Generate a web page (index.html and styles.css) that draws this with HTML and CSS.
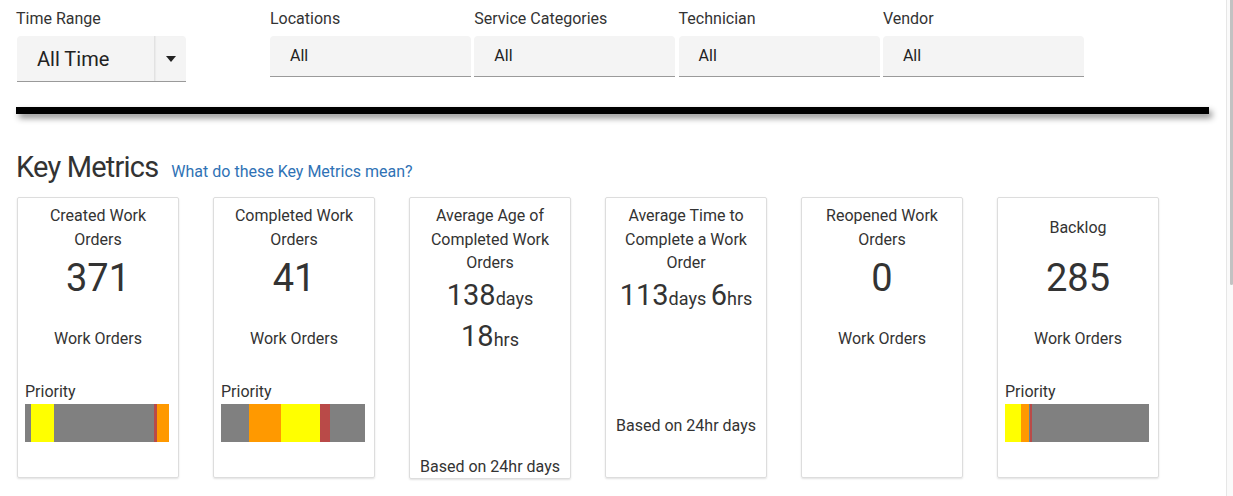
FILE: index.html
```html
<!DOCTYPE html>
<html lang="en">
<head>
    <meta charset="UTF-8">
    <meta name="viewport" content="width=device-width, initial-scale=1.0">
    <title>Work Order Dashboard</title>
    <link rel="stylesheet" href="styles.css">
</head>
<body>
    <div class="page">
        <div class="filters">
            <div class="filter time-range">
                <label>Time Range</label>
                <div class="select">
                    <span class="select-value">All Time</span>
                    <span class="select-arrow"></span>
                </div>
            </div>
            <div class="filter">
                <label>Locations</label>
                <div class="field">All</div>
            </div>
            <div class="filter">
                <label>Service Categories</label>
                <div class="field">All</div>
            </div>
            <div class="filter">
                <label>Technician</label>
                <div class="field">All</div>
            </div>
            <div class="filter">
                <label>Vendor</label>
                <div class="field">All</div>
            </div>
        </div>

        <div class="divider"></div>

        <div class="section-head">
            <h2>Key Metrics</h2>
            <a href="#" class="help-link">What do these Key Metrics mean?</a>
        </div>

        <div class="metrics">
            <div class="metric-card">
                <div class="metric-title">Created Work Orders</div>
                <div class="metric-value">371</div>
                <div class="metric-unit">Work Orders</div>
                <div class="priority">
                    <div class="priority-label">Priority</div>
                    <div class="priority-bar">
                        <span class="seg grey" style="width:6px"></span>
                        <span class="seg yellow" style="width:23px"></span>
                        <span class="seg grey" style="width:100px"></span>
                        <span class="seg red" style="width:3px"></span>
                        <span class="seg orange" style="width:12px"></span>
                    </div>
                </div>
            </div>

            <div class="metric-card">
                <div class="metric-title">Completed Work Orders</div>
                <div class="metric-value">41</div>
                <div class="metric-unit">Work Orders</div>
                <div class="priority">
                    <div class="priority-label">Priority</div>
                    <div class="priority-bar">
                        <span class="seg grey" style="width:28px"></span>
                        <span class="seg orange" style="width:32px"></span>
                        <span class="seg yellow" style="width:39px"></span>
                        <span class="seg red" style="width:10px"></span>
                        <span class="seg grey" style="width:35px"></span>
                    </div>
                </div>
            </div>

            <div class="metric-card">
                <div class="metric-title">Average Age of Completed Work Orders</div>
                <div class="metric-duration">138<small>days</small><br>18<small>hrs</small></div>
                <div class="metric-note">Based on 24hr days</div>
            </div>

            <div class="metric-card">
                <div class="metric-title">Average Time to Complete a Work Order</div>
                <div class="metric-duration">113<small>days </small>6<small>hrs</small></div>
                <div class="metric-note">Based on 24hr days</div>
            </div>

            <div class="metric-card">
                <div class="metric-title">Reopened Work Orders</div>
                <div class="metric-value">0</div>
                <div class="metric-unit">Work Orders</div>
            </div>

            <div class="metric-card">
                <div class="metric-title">Backlog</div>
                <div class="metric-value">285</div>
                <div class="metric-unit">Work Orders</div>
                <div class="priority">
                    <div class="priority-label">Priority</div>
                    <div class="priority-bar">
                        <span class="seg yellow" style="width:16px"></span>
                        <span class="seg orange" style="width:8px"></span>
                        <span class="seg slate" style="width:1px"></span>
                        <span class="seg red" style="width:2px"></span>
                        <span class="seg grey" style="width:117px"></span>
                    </div>
                </div>
            </div>
        </div>
    </div>

    <div class="scrollbar"><div class="scroll-thumb"></div></div>
</body>
</html>
```

FILE: styles.css
```css
html, body {
    height: 100%;
}
body {
    margin: 0;
    display: flex;
    font-family: Roboto, "Liberation Sans", Arial, sans-serif;
    color: #333;
    background-color: white;
    overflow: hidden;
}
.page {
    flex: 1;
    padding: 10px 0 0 16px;
}

/* filters */
.filters {
    display: flex;
    align-items: flex-start;
}
.filter {
    width: 201px;
    margin-right: 3.3px;
}
.filter label {
    display: block;
    font-size: 16px;
    line-height: 18px;
    margin-bottom: 8px;
}
.filter.time-range {
    width: 254px;
    margin-right: 0;
}
.field {
    background-color: #f4f4f4;
    border-bottom: 1px solid #9a9a9a;
    border-radius: 4px 4px 0 0;
    height: 40px;
    line-height: 40px;
    padding-left: 20px;
    font-size: 16px;
    color: #222;
}
.select {
    display: flex;
    width: 169px;
    height: 45px;
    margin: 1px 0 0 1px;
    background-color: #f4f4f4;
    border-bottom: 1px solid #9a9a9a;
    border-radius: 4px 4px 0 0;
}
.select-value {
    flex: 1;
    padding-left: 20px;
    line-height: 46px;
    font-size: 20px;
    color: #222;
}
.select-arrow {
    width: 31px;
    border-left: 1px solid #e2e2e2;
    box-shadow: inset 1px 0 1px rgba(0,0,0,0.04);
    display: flex;
    align-items: center;
    justify-content: center;
}
.select-arrow::after {
    content: "";
    border-left: 5px solid transparent;
    border-right: 5px solid transparent;
    border-top: 6px solid #222;
}

.divider {
    height: 7px;
    margin: 25px 17px 0 0;
    background-color: #000;
    box-shadow: 3px 4px 6px rgba(0,0,0,0.45);
}

/* key metrics */
.section-head {
    display: flex;
    align-items: baseline;
    margin-top: 36px;
}
.section-head h2 {
    margin: 0;
    font-size: 29px;
    font-weight: 400;
    line-height: 34px;
    letter-spacing: -0.8px;
    color: #333;
}
.help-link {
    margin-left: 13px;
    font-size: 16px;
    color: #2f72b5;
    text-decoration: none;
}

.metrics {
    display: flex;
    align-items: flex-start;
    gap: 34px;
    margin: 13px 0 0 1px;
}
.metric-card {
    box-sizing: border-box;
    width: 162px;
    min-height: 281px;
    padding: 6px 7px 0 7px;
    border: 1px solid #ddd;
    border-radius: 2px;
    box-shadow: 0 1px 2px rgba(0,0,0,0.12);
    text-align: center;
}
.metric-title {
    min-height: 47px;
    display: flex;
    align-items: center;
    justify-content: center;
    font-size: 16px;
    line-height: 23.5px;
}
.metric-value {
    font-size: 38px;
    line-height: 54px;
}
.metric-unit {
    margin-top: 22px;
    font-size: 16px;
    line-height: 24px;
}
.metric-duration {
    font-size: 29px;
    line-height: 41px;
}
.metric-duration small {
    font-size: 18px;
    line-height: 1;
}
.metric-note {
    margin-top: 99px;
    font-size: 16px;
    line-height: 22px;
}

.priority {
    margin-top: 30px;
    text-align: left;
}
.priority-label {
    font-size: 16px;
    line-height: 22px;
    margin-bottom: 1px;
}
.priority-bar {
    display: flex;
    width: 144px;
    height: 38px;
}
.seg {
    display: block;
    height: 100%;
}
.grey { background-color: #808080; }
.yellow { background-color: #ffff00; }
.orange { background-color: #ff9900; }
.red { background-color: #b94a48; }
.slate { background-color: #6e8092; }

/* window scrollbar */
.scrollbar {
    width: 3px;
    padding-left: 3px;
    border-left: 1px solid #e6e6e6;
    background-color: #fafafa;
}
.scroll-thumb {
    height: 285px;
    background-color: #c2c2c2;
    border-radius: 0 0 2px 2px;
}
```
